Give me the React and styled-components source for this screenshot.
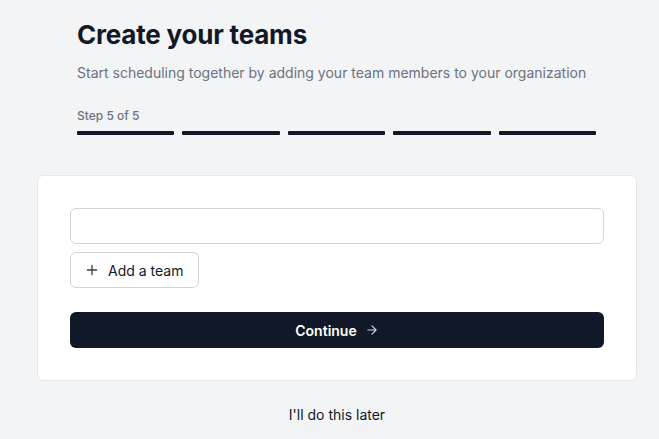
import React from "react";
import styled, { createGlobalStyle } from "styled-components";

const Global = createGlobalStyle`
  html, body { margin: 0; padding: 0; background: #f3f4f6; }
  body { font-family: Inter, "Noto Sans", sans-serif; color: #111827; }
`;

const Page = styled.div`
  width: 659px;
  min-height: 439px;
  background: #f3f4f6;
  display: flex;
  flex-direction: column;
`;

const Header = styled.div`
  margin-left: 77px;
  width: 519px;
  padding-top: 18px;
  display: flex;
  flex-direction: column;
`;

const Title = styled.h1`
  margin: 0;
  font-size: 26px;
  line-height: 34px;
  font-weight: 700;
  letter-spacing: -0.2px;
  color: #111827;
`;

const Subtitle = styled.p`
  margin: 11px 0 0;
  font-size: 14px;
  line-height: 20px;
  color: #6b7280;
`;

const StepLabel = styled.div`
  margin-top: 25px;
  font-size: 12px;
  line-height: 16px;
  font-weight: 500;
  color: #6b7280;
`;

const Steps = styled.div`
  margin-top: 7px;
  display: grid;
  grid-template-columns: repeat(5, 1fr);
  gap: 8px;
`;

const StepBar = styled.div`
  height: 4px;
  border-radius: 1px;
  background: ${(p) => (p.$done ? "#111827" : "#d1d5db")};
`;

const Card = styled.div`
  margin: 40px 0 0 37px;
  width: 600px;
  box-sizing: border-box;
  background: #fff;
  border: 1px solid #e5e7eb;
  border-radius: 6px;
  padding: 32px 32px 32px;
  display: flex;
  flex-direction: column;
`;

const Input = styled.input`
  box-sizing: border-box;
  height: 36px;
  width: 100%;
  border: 1px solid #d1d5db;
  border-radius: 6px;
  padding: 0 12px;
  font-family: inherit;
  font-size: 14px;
  outline: none;
  background: #fff;
`;

const AddButton = styled.button`
  margin-top: 8px;
  align-self: flex-start;
  box-sizing: border-box;
  height: 36px;
  padding: 0 15px 0 13px;
  display: flex;
  align-items: center;
  gap: 8px;
  background: #fff;
  border: 1px solid #d1d5db;
  border-radius: 6px;
  font-family: inherit;
  font-size: 14px;
  font-weight: 400;
  color: #111827;
`;

const ContinueButton = styled.button`
  margin-top: 24px;
  height: 36px;
  width: 100%;
  display: flex;
  align-items: center;
  justify-content: center;
  gap: 8px;
  background: #111827;
  color: #fff;
  border: none;
  border-radius: 6px;
  font-family: inherit;
  font-size: 14px;
  font-weight: 600;
`;

const Later = styled.button`
  margin: 23px 0 0 37px;
  width: 600px;
  background: none;
  border: none;
  font-family: inherit;
  font-size: 14px;
  line-height: 20px;
  font-weight: 400;
  color: #111827;
  text-align: center;
`;

const Plus = () => (
  <svg width="16" height="16" viewBox="0 0 24 24" fill="none" stroke="#374151" strokeWidth="2" strokeLinecap="round">
    <path d="M12 5v14M5 12h14" />
  </svg>
);

const Arrow = () => (
  <svg width="14" height="14" viewBox="0 0 24 24" fill="none" stroke="#d1d5db" strokeWidth="2" strokeLinecap="round" strokeLinejoin="round">
    <path d="M5 12h14M12 5l7 7-7 7" />
  </svg>
);

export default function App() {
  return (
    <Page>
      <Global />
      <Header>
        <Title>Create your teams</Title>
        <Subtitle>Start scheduling together by adding your team members to your organization</Subtitle>
        <StepLabel>Step 5 of 5</StepLabel>
        <Steps>
          {[0, 1, 2, 3, 4].map((i) => (
            <StepBar key={i} $done />
          ))}
        </Steps>
      </Header>
      <Card>
        <Input />
        <AddButton>
          <Plus />
          Add a team
        </AddButton>
        <ContinueButton>
          Continue
          <Arrow />
        </ContinueButton>
      </Card>
      <Later>I'll do this later</Later>
    </Page>
  );
}
